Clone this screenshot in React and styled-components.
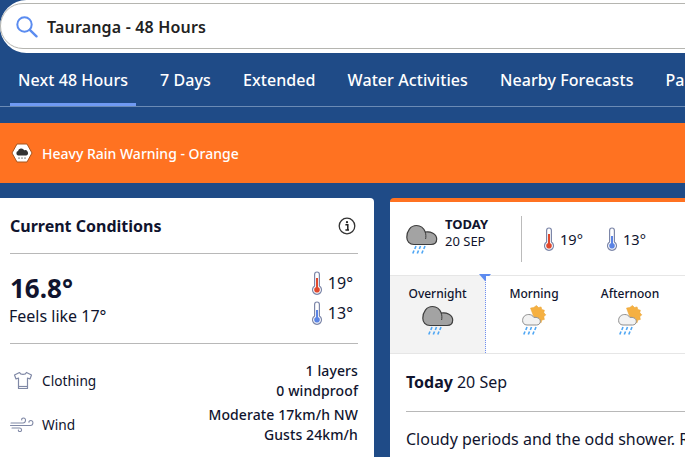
import styled, { createGlobalStyle } from 'styled-components';

const GlobalStyle = createGlobalStyle`
  html, body {
    margin: 0;
    height: 100%;
    overflow: hidden;
    background: #1f4b87;
    font-family: "Noto Sans", "Open Sans", sans-serif;
  }
  * { box-sizing: border-box; }
`;

function SearchIcon() {
  return (
    <svg width="23" height="23" viewBox="0 0 23 23" fill="none" stroke="#5b8cf0" strokeWidth="2">
      <circle cx="9.5" cy="9.5" r="7.2" />
      <path d="M14.8 14.8 L21.5 21.3" strokeWidth="2.4" strokeLinecap="round" />
    </svg>
  );
}

function HexIcon() {
  return (
    <svg width="22" height="20" viewBox="0 0 22 20">
      <path d="M6 1 H16 L21 10 L16 19 H6 L1 10 Z" fill="#fff" stroke="#a8551c" strokeWidth="1" />
      <path d="M7 12.5 a2.3 2.3 0 0 1 0-4.4 a3.3 3.3 0 0 1 6.2-.8 a2.6 2.6 0 0 1 2 5.2 Z" fill="#333" />
      <path d="M8 14.5v1.2M11 14.5v1.2M14 14.5v1.2" stroke="#333" strokeWidth="1" />
    </svg>
  );
}

function InfoIcon() {
  return (
    <svg width="18" height="18" viewBox="0 0 18 18" fill="none">
      <circle cx="9" cy="9" r="7.8" stroke="#333" strokeWidth="1.3" />
      <circle cx="9" cy="5.2" r="1.1" fill="#222" />
      <path d="M7.4 7.8 H9.8 V12.6 M7.4 13 H11" stroke="#222" strokeWidth="1.5" />
    </svg>
  );
}

function Thermometer({ color, level }) {
  return (
    <svg width="12" height="24" viewBox="0 0 12 24" fill="none">
      <path
        d="M3.6 15 V3.4 a2.4 2.4 0 0 1 4.8 0 V15 a4.5 4.5 0 1 1 -4.8 0 Z"
        fill="#fff"
        stroke="#7c86a8"
        strokeWidth="1.2"
      />
      <path d={`M6 ${level} V18`} stroke={color} strokeWidth="2" />
      <circle cx="6" cy="18.7" r="2.8" fill={color} />
    </svg>
  );
}

function ShirtIcon() {
  return (
    <svg width="20" height="19" viewBox="0 0 20 19" fill="none" stroke="#8089a6" strokeWidth="1.2" strokeLinejoin="round">
      <path d="M6.5 1.5 L1.5 4 L3 8 L5.5 7 V17.5 H14.5 V7 L17 8 L18.5 4 L13.5 1.5 C12.5 4 7.5 4 6.5 1.5 Z" />
      <path d="M5.5 15.5 H14.5" />
    </svg>
  );
}

function WindIcon() {
  return (
    <svg width="24" height="16" viewBox="0 0 24 16" fill="none" stroke="#8089a6" strokeWidth="1.1" strokeLinecap="round">
      <path d="M1 7 H13 C16 7 16.5 2 13.5 2 C12 2 11.5 3 11.7 4" />
      <path d="M0.5 9.5 H20.5 C23.5 9.5 23.8 4.5 20.8 4.5 C19.5 4.5 18.8 5.5 19 6.3" />
      <path d="M2 12 H9.5 C12 12 12.3 15.6 9.8 15.6 C8.7 15.6 8.2 14.8 8.4 14" />
    </svg>
  );
}

function RainDrops({ x = 0 }) {
  const lines = [[0, 24], [4.5, 24], [9, 24], [-2, 28.5], [2.5, 28.5], [7, 28.5]];
  return (
    <g stroke="#4ea6f4" strokeWidth="1.6">
      {lines.map(([dx, y], i) => (
        <path key={i} d={`M${x + dx + 11} ${y - 2} l-1.2 3`} />
      ))}
    </g>
  );
}

function RainCloud() {
  return (
    <svg width="32" height="30" viewBox="0 0 32 30">
      <path
        d="M8 20.5 C3.5 20.5 0.8 17.3 0.8 13.2 C0.8 7 4.5 1.5 10.5 1.5 C15 1.5 18 4.8 19.3 8 C24.5 7.3 30.7 9.5 30.7 15 C30.7 18.5 28.5 20.5 25 20.5 Z"
        fill="#a3a3a3"
        stroke="#3d3d3d"
        strokeWidth="1.2"
      />
      <path d="M19.3 8 C20 10.5 20 13 19.6 15" fill="none" stroke="#3d3d3d" strokeWidth="1" />
      <RainDrops x={-1} />
    </svg>
  );
}

function SunCloudRain() {
  return (
    <svg width="25" height="30" viewBox="0 0 25 30">
      <path
        d="M14.5 0.5 l2 2 2.6-.6 .7 2.6 2.6 .7-.6 2.6 2 2-2 2 .6 2.6-2.6 .7-.7 2.6-2.6-.6 -5-6 -3-8 3.3-.7 Z"
        fill="#f5b041"
        stroke="#e9a02f"
        strokeWidth="0.5"
      />
      <path
        d="M5 20 C2 20 0.6 17.8 0.6 15.5 C0.6 12 3 9.5 6.8 9.5 C9 9.5 10.8 10.5 11.8 12.4 C15 12 18.3 13.3 18.3 16.4 C18.3 18.6 16.8 20 14.5 20 Z"
        fill="#f2f2f2"
        stroke="#8f8f8f"
        strokeWidth="1"
      />
      <RainDrops x={-6} />
    </svg>
  );
}

const Page = styled.div`
  width: 685px;
  height: 457px;
  overflow: hidden;
`;

const SearchWrap = styled.div`
  height: 53px;
  width: 705px;
  background: #fff;
  border-radius: 27px 0 0 27px;
  padding-top: 3px;
`;

const SearchBar = styled.div`
  height: 46px;
  display: flex;
  align-items: center;
  gap: 9px;
  padding: 1px 0 0 14px;
  border: 1px solid #b5b5b0;
  border-radius: 23px 0 0 23px;
  font-size: 16px;
  letter-spacing: 0.17px;
  font-weight: 600;
  color: #222;
`;

const Nav = styled.nav`
  height: 54px;
  display: flex;
  padding-left: 10px;
  border-bottom: 1px solid #6b8bb5;
  white-space: nowrap;
`;

const NavItem = styled.a`
  height: 53px;
  padding: 16px 8px 0;
  margin-right: 16px;
  font-size: 16px;
  letter-spacing: 0.08px;
  font-weight: 500;
  color: #fff;
  border-bottom: 3px solid ${(p) => (p.$active ? '#6f9af3' : 'transparent')};
`;

const Alert = styled.div`
  height: 60px;
  margin-top: 16px;
  background: #ff7221;
  display: flex;
  align-items: center;
  gap: 9px;
  padding-left: 11px;
  font-size: 14px;
  font-weight: 500;
  color: #fff;
`;

const Columns = styled.div`
  display: grid;
  grid-template-columns: 374px 310px;
  gap: 16px;
  margin-top: 15px;
`;

const Card = styled.section`
  height: 300px;
  background: #fff;
  border-radius: 0 4px 0 0;
  padding: 0 16px 0 10px;
`;

const CardHead = styled.div`
  height: 56px;
  display: flex;
  align-items: center;
  justify-content: space-between;
  padding: 0 2px 0 0;
  border-bottom: 1px solid #b8b8b8;
  font-size: 16px;
  font-weight: 700;
  color: #10142e;
`;

const NowRow = styled.div`
  height: 90px;
  display: flex;
  justify-content: space-between;
  padding: 17px 0 0;
  border-bottom: 1px solid #b8b8b8;
`;

const Temp = styled.div`
  font-size: 26px;
  line-height: 34px;
  font-weight: 700;
  color: #10142e;
`;

const Feels = styled.div`
  font-size: 16px;
  line-height: 22px;
  margin-left: -1px;
  color: #10142e;
`;

const Range = styled.div`
  display: flex;
  flex-direction: column;
  gap: 6px;
  padding: 0 5px 0 0;
`;

const RangeItem = styled.div`
  height: 24px;
  display: flex;
  align-items: center;
  gap: 5px;
  font-size: 16px;
  color: #10142e;
`;

const StatList = styled.div`
  padding-top: 15px;
`;

const Stat = styled.div`
  height: 44px;
  display: flex;
  align-items: center;
  justify-content: space-between;
  font-size: 14px;
  color: #10142e;
`;

const StatLabel = styled.div`
  display: flex;
  align-items: center;
  font-size: 13.7px;
  margin-top: -2px;
`;

const StatIcon = styled.span`
  width: 32px;
  display: flex;
  padding-left: ${(p) => (p.$pad ? '3px' : '0')};
`;

const StatValue = styled.div`
  text-align: right;
  line-height: 20px;
  letter-spacing: 0.1px;
  font-weight: 500;
  margin-top: -1px;
`;

const Forecast = styled.section`
  height: 300px;
  width: 310px;
  background: #fff;
  border-top: 4px solid #ff7221;
  border-radius: 4px 0 0 0;
  color: #10142e;
`;

const Summary = styled.div`
  height: 74px;
  display: flex;
  align-items: center;
  padding: 0 0 0 16px;
  border-bottom: 1px solid #e6e6e6;
`;

const SummaryDate = styled.div`
  margin-left: 7px;
  width: 77px;
  height: 46px;
  border-right: 1px solid #bbb;
  font-size: 13px;
  line-height: 17px;
`;

const Strong = styled.div`
  font-weight: 700;
`;

const SummaryTemps = styled.div`
  display: flex;
  gap: 23px;
  margin-left: 21px;
  font-size: 14.6px;
`;

const TempItem = styled.div`
  display: flex;
  align-items: center;
  gap: 5px;
`;

const Periods = styled.div`
  height: 78px;
  display: flex;
  border-bottom: 1px solid #e6e6e6;
`;

const Period = styled.div`
  position: relative;
  width: ${(p) => p.$width}px;
  background: ${(p) => (p.$active ? '#f3f3f3' : '#fff')};
  border-right: ${(p) => (p.$active ? '1px dotted #6f8ff0' : 'none')};
  display: flex;
  flex-direction: column;
  align-items: center;
  padding-top: 9px;
  gap: 3px;
  font-size: 12px;
  line-height: 17px;
  font-weight: 500;
`;

const Marker = styled.span`
  position: absolute;
  top: -2px;
  right: -6px;
  width: 0;
  height: 0;
  border-left: 6px solid transparent;
  border-right: 6px solid transparent;
  border-top: 7px solid #5d8bf0;
`;

const Body = styled.div`
  padding: 0 0 0 16px;
`;

const DayTitle = styled.div`
  height: 58px;
  display: flex;
  align-items: center;
  gap: 4px;
  padding-bottom: 2px;
  border-bottom: 1px solid #b8b8b8;
  font-size: 16px;
`;

const DayBold = styled.b`
  font-weight: 700;
`;

const Description = styled.p`
  margin: 16px 0 0;
  font-size: 16px;
  line-height: 22px;
  white-space: nowrap;
`;

const navItems = ['Next 48 Hours', '7 Days', 'Extended', 'Water Activities', 'Nearby Forecasts', 'Park Forecasts'];

export default function App() {
  return (
    <Page>
      <GlobalStyle />
      <SearchWrap>
        <SearchBar>
          <SearchIcon />
          Tauranga - 48 Hours
        </SearchBar>
      </SearchWrap>
      <Nav>
        {navItems.map((item, i) => (
          <NavItem key={item} $active={i === 0}>{item}</NavItem>
        ))}
      </Nav>
      <Alert>
        <HexIcon />
        Heavy Rain Warning - Orange
      </Alert>
      <Columns>
        <Card>
          <CardHead>
            Current Conditions
            <InfoIcon />
          </CardHead>
          <NowRow>
            <div>
              <Temp>16.8°</Temp>
              <Feels>Feels like 17°</Feels>
            </div>
            <Range>
              <RangeItem><Thermometer color="#e0492e" level={7} />19°</RangeItem>
              <RangeItem><Thermometer color="#5b84e4" level={9} />13°</RangeItem>
            </Range>
          </NowRow>
          <StatList>
            <Stat>
              <StatLabel><StatIcon $pad><ShirtIcon /></StatIcon>Clothing</StatLabel>
              <StatValue>1 layers<br />0 windproof</StatValue>
            </Stat>
            <Stat>
              <StatLabel><StatIcon><WindIcon /></StatIcon>Wind</StatLabel>
              <StatValue>Moderate 17km/h NW<br />Gusts 24km/h</StatValue>
            </Stat>
          </StatList>
        </Card>
        <Forecast>
          <Summary>
            <RainCloud />
            <SummaryDate>
              <Strong>TODAY</Strong>
              20 SEP
            </SummaryDate>
            <SummaryTemps>
              <TempItem><Thermometer color="#e0492e" level={7} />19°</TempItem>
              <TempItem><Thermometer color="#5b84e4" level={9} />13°</TempItem>
            </SummaryTemps>
          </Summary>
          <Periods>
            <Period $width={96} $active>
              Overnight
              <RainCloud />
              <Marker />
            </Period>
            <Period $width={96}>
              Morning
              <SunCloudRain />
            </Period>
            <Period $width={96}>
              Afternoon
              <SunCloudRain />
            </Period>
          </Periods>
          <Body>
            <DayTitle><DayBold>Today</DayBold> 20 Sep</DayTitle>
            <Description>Cloudy periods and the odd shower. Rain</Description>
          </Body>
        </Forecast>
      </Columns>
    </Page>
  );
}
